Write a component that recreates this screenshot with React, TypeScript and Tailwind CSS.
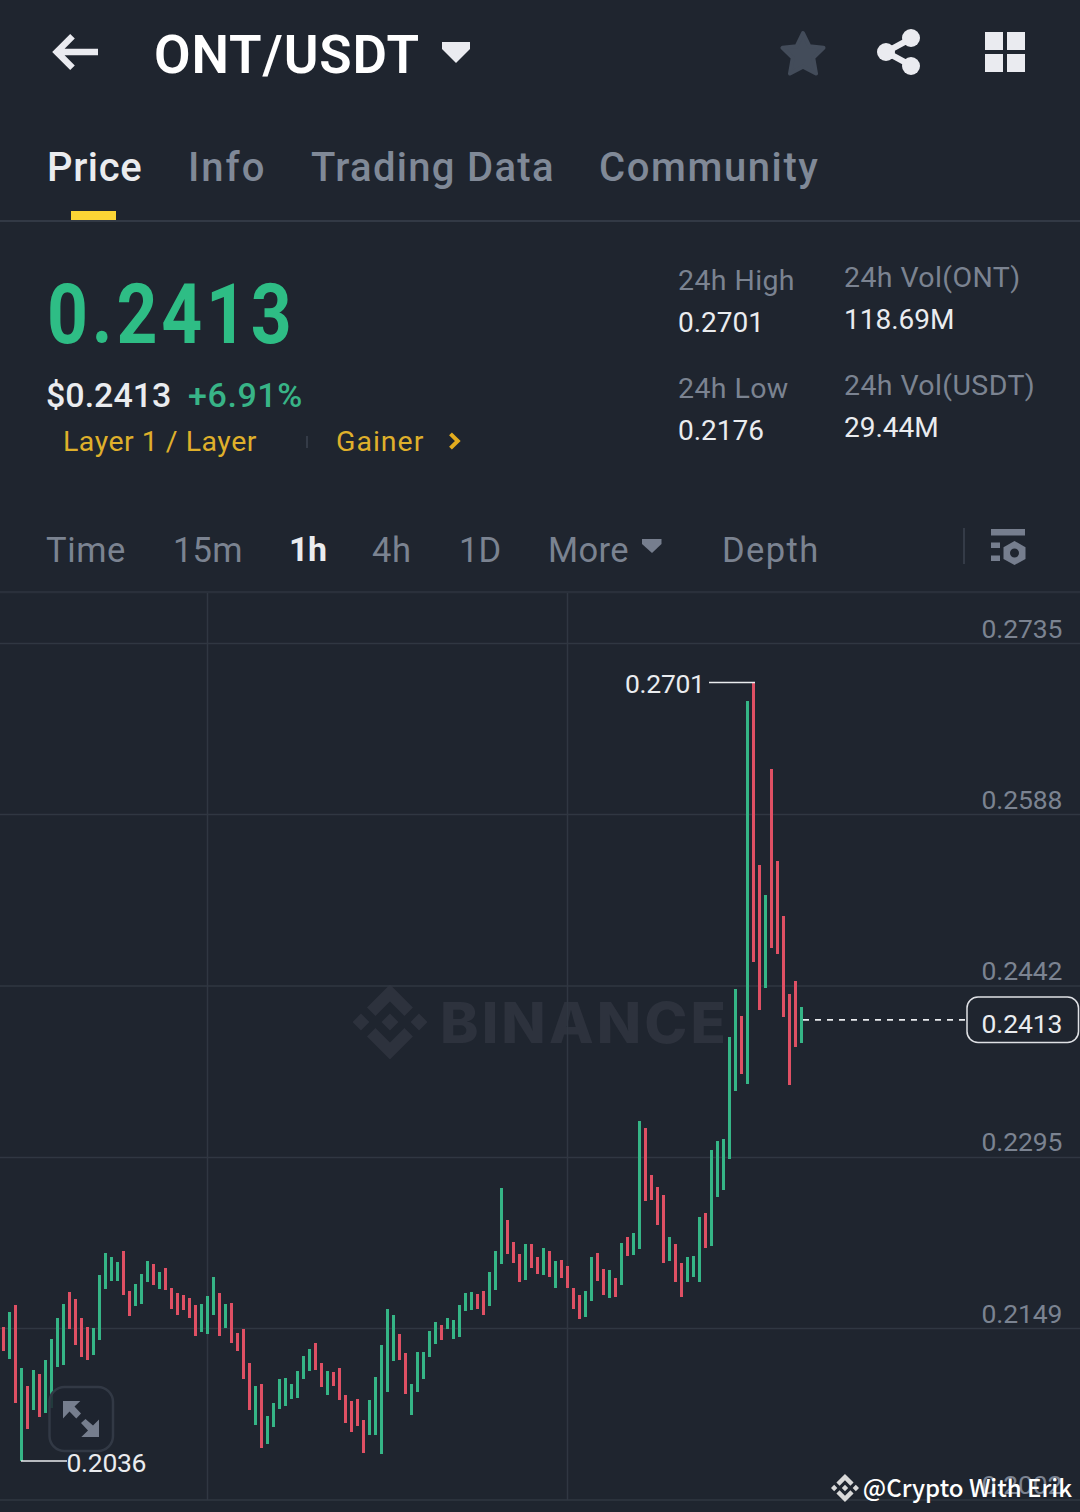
import { SiBinance } from "react-icons/si";

type Candle = ["g" | "r", number, number];

const UP = "#35b586";
const DOWN = "#df5064";
const GRID = "#303742";

const tabs = [
  { label: "Price", style: "w-[141px] tracking-[0.6px]", active: true },
  { label: "Info", style: "w-[123px] tracking-[2px]" },
  { label: "Trading Data", style: "w-[288px] tracking-[1.3px]" },
  { label: "Community", style: "w-[230px] tracking-[1.6px]" },
];

const axisLabels = [
  { value: "0.2735", y: 638 },
  { value: "0.2588", y: 809 },
  { value: "0.2442", y: 980 },
  { value: "0.2295", y: 1151 },
  { value: "0.2149", y: 1323 },
  { value: "0.2002", y: 1494 },
];

const gridRows = [643.5, 814.5, 986, 1157.5, 1328.5, 1500];
const gridCols = [207.5, 567.5];

// [direction, high, low] in chart units, one every 6px
const candles: Candle[] = [
  ["r", 1327, 1351], ["g", 1312, 1359], ["r", 1305, 1403], ["g", 1368, 1461], ["r", 1386, 1429],
  ["g", 1370, 1410], ["r", 1374, 1417], ["g", 1360, 1413], ["g", 1339, 1408], ["g", 1318, 1367],
  ["g", 1304, 1365], ["r", 1292, 1329], ["r", 1299, 1345], ["r", 1318, 1357], ["r", 1327, 1360],
  ["g", 1328, 1355], ["g", 1275, 1340], ["g", 1253, 1289], ["g", 1257, 1281], ["g", 1262, 1281],
  ["r", 1251, 1295], ["r", 1291, 1316], ["g", 1284, 1306], ["g", 1274, 1304], ["g", 1261, 1282],
  ["r", 1264, 1285], ["g", 1272, 1289], ["r", 1268, 1290], ["r", 1288, 1309], ["r", 1293, 1315],
  ["r", 1295, 1310], ["r", 1298, 1318], ["r", 1305, 1336], ["g", 1304, 1332], ["g", 1296, 1334],
  ["g", 1277, 1315], ["r", 1293, 1336], ["g", 1304, 1328], ["r", 1303, 1343], ["r", 1333, 1351],
  ["r", 1329, 1379], ["r", 1363, 1410], ["g", 1386, 1425], ["r", 1384, 1448], ["g", 1416, 1444],
  ["g", 1403, 1427], ["g", 1379, 1409], ["g", 1378, 1406], ["g", 1384, 1399], ["g", 1371, 1398],
  ["g", 1356, 1379], ["g", 1349, 1371], ["r", 1343, 1370], ["r", 1363, 1387], ["g", 1371, 1395],
  ["r", 1372, 1386], ["r", 1368, 1400], ["r", 1395, 1423], ["r", 1401, 1432], ["r", 1399, 1426],
  ["r", 1420, 1453], ["g", 1400, 1435], ["g", 1377, 1435], ["g", 1345, 1454], ["g", 1309, 1392],
  ["g", 1315, 1361], ["r", 1334, 1360], ["r", 1353, 1394], ["g", 1384, 1415], ["g", 1352, 1392],
  ["g", 1352, 1379], ["g", 1331, 1357], ["g", 1322, 1344], ["r", 1325, 1340], ["g", 1318, 1329],
  ["g", 1320, 1339], ["g", 1305, 1337], ["g", 1293, 1311], ["g", 1292, 1310], ["r", 1294, 1309],
  ["r", 1291, 1315], ["g", 1272, 1306], ["g", 1251, 1290], ["g", 1188, 1264], ["r", 1220, 1254],
  ["r", 1242, 1263], ["r", 1254, 1282], ["g", 1244, 1280], ["r", 1244, 1268], ["r", 1257, 1274],
  ["g", 1248, 1275], ["r", 1251, 1277], ["g", 1261, 1288], ["r", 1260, 1278], ["r", 1266, 1288],
  ["r", 1288, 1309], ["r", 1295, 1319], ["g", 1291, 1317], ["g", 1257, 1301], ["r", 1253, 1281],
  ["r", 1269, 1295], ["g", 1270, 1298], ["r", 1278, 1297], ["g", 1243, 1285], ["r", 1237, 1256],
  ["g", 1233, 1255], ["g", 1121, 1249], ["r", 1128, 1201], ["r", 1175, 1200], ["r", 1187, 1225],
  ["r", 1195, 1263], ["g", 1237, 1261], ["r", 1244, 1282], ["r", 1263, 1297], ["g", 1257, 1282],
  ["g", 1256, 1277], ["g", 1217, 1282], ["r", 1213, 1248], ["g", 1150, 1246], ["g", 1141, 1197],
  ["g", 1139, 1190], ["g", 1037, 1159], ["g", 989, 1091], ["r", 1016, 1074], ["g", 701, 1084],
  ["r", 682, 962], ["r", 865, 1010], ["g", 895, 988], ["r", 769, 948], ["r", 861, 954],
  ["r", 916, 1017], ["r", 994, 1085], ["r", 981, 1047], ["g", 1007, 1043],
];

function Stat({ label, value }: { label: string; value: string }) {
  return (
    <div className="leading-[42px] whitespace-nowrap">
      <div className="text-[28.5px] text-[#7b8391] tracking-[0.4px]">{label}</div>
      <div className="text-[28px] text-[#eaecef]">{value}</div>
    </div>
  );
}

function Header() {
  return (
    <header className="flex h-[105px] items-center">
      <svg className="ml-[52px] -mt-px h-9 w-[46px]" viewBox="0 0 46 36" fill="none" stroke="#eaebf0" strokeWidth="6.5">
        <path d="M20.5 2.3L4.8 18l15.7 15.7M4 18h42" />
      </svg>
      <h1 className="ml-[56px] mt-[5px] w-[288px] whitespace-nowrap text-[53px] font-semibold leading-[60px] tracking-[0.9px] text-white">ONT/USDT</h1>
      <svg className="h-[21px] w-7" viewBox="0 0 28 21" fill="#eaebf0">
        <path d="M0 0h28v7L14 21 0 7z" />
      </svg>
      <svg className="ml-[310px] h-[46px] w-[46px]" viewBox="0 0 46 46" fill="#434c5a" stroke="#434c5a" strokeWidth="4" strokeLinejoin="round">
        <path d="M23 3l6.3 13.2 14.2 1.6-10.3 9.9 2.8 15.8L23 36.8 10 43.5l2.8-15.8L2.5 17.8l14.2-1.6z" />
      </svg>
      <svg className="-mt-px ml-[51px] h-[46px] w-11" viewBox="0 0 44 46" fill="#eaebf0">
        <path d="M34 9.5L9 23l25 13.5" fill="none" stroke="#eaebf0" strokeWidth="6" />
        <circle cx="34" cy="9" r="9" />
        <circle cx="9" cy="23" r="9" />
        <circle cx="34" cy="37" r="9" />
      </svg>
      <div className="-mt-0.5 ml-[64px] grid h-10 w-10 grid-cols-2 gap-1">
        <span className="bg-[#eaebf0]" />
        <span className="bg-[#eaebf0]" />
        <span className="bg-[#eaebf0]" />
        <span className="bg-[#eaebf0]" />
      </div>
    </header>
  );
}

function Tabs() {
  return (
    <nav className="flex h-[117px] border-b-2 border-[#323945] pl-[47px] pt-[43px]">
      {tabs.map((tab) => (
        <div key={tab.label} className={tab.style}>
          <div className={`whitespace-nowrap text-[40px] font-medium leading-[40px] ${tab.active ? "text-[#eaecef]" : "text-[#808997]"}`}>
            {tab.label}
          </div>
          {tab.active && <div className="ml-6 mt-[23px] h-[9px] w-[45px] bg-[#fcd535]" />}
        </div>
      ))}
    </nav>
  );
}

function Summary() {
  return (
    <section className="flex h-[286px]">
      <div className="w-[678px] pl-[46px] pt-[53px]">
        <div className="ml-px origin-left scale-x-[0.86] text-[83px] font-bold leading-[80px] tracking-[4.5px] text-[#2ebd85]">0.2413</div>
        <div className="mt-5 flex text-[34px] leading-[40px]">
          <span className="w-[142px] font-medium text-[#eaecef]">$0.2413</span>
          <span className="font-medium tracking-[0.6px] text-[#38b487]">+6.91%</span>
        </div>
        <div className="mt-[9px] flex items-center pl-[17px] text-[28.5px] leading-9 text-[#dfb02b]">
          <span className="w-[243px] whitespace-nowrap tracking-[0.5px]">Layer 1 / Layer</span>
          <span className="h-3 w-0.5 bg-[#343b47]" />
          <span className="ml-[28px] w-[113px] tracking-[1px]">Gainer</span>
          <svg className="-mt-0.5 h-[18px] w-3" viewBox="0 0 12 18" fill="none" stroke="#e3ac1e" strokeWidth="4">
            <path d="M1.5 1.8L8.8 9l-7.3 7.2" />
          </svg>
        </div>
      </div>
      <div className="flex w-[166px] flex-col gap-6 pt-[38px]">
        <Stat label="24h High" value="0.2701" />
        <Stat label="24h Low" value="0.2176" />
      </div>
      <div className="flex flex-col gap-6 pt-[35px]">
        <Stat label="24h Vol(ONT)" value="118.69M" />
        <Stat label="24h Vol(USDT)" value="29.44M" />
      </div>
    </section>
  );
}

function Intervals() {
  return (
    <section className="flex h-[83px] items-center pl-[46px] pt-0.5 text-[34.5px] text-[#7b8391]">
      <span className="w-[127px] tracking-[0.6px]">Time</span>
      <span className="w-[116px] tracking-[0.2px]">15m</span>
      <span className="w-[83px] -mt-0.5 text-[34px] font-bold tracking-[-0.5px] text-[#eaecef]">1h</span>
      <span className="w-[87px] tracking-[0.5px]">4h</span>
      <span className="w-[89px]">1D</span>
      <span className="w-[94px] tracking-[0.4px]">More</span>
      <svg className="-mt-2.5 h-[14px] w-5" viewBox="0 0 20 14" fill="#767e8e">
        <path d="M0 0h19.5v5L10 14 0 5z" />
      </svg>
      <span className="ml-[60px] w-[241px] tracking-[1.4px]">Depth</span>
      <span className="-mt-2.5 h-9 w-0.5 bg-[#343b47]" />
      <svg className="-mt-2 ml-[25px] h-9 w-9" viewBox="0 0 36 36" fill="#767e8e">
        <path d="M1 0h34v6.5H1zM1 13.5h9V19H1zM1 26.5h9V32H1z" />
        <path fillRule="evenodd" d="M24.5 12l11 6.3v11.6L24.5 36l-11-6.1V18.3zM24.5 19.5a4.5 4.5 0 100 9 4.5 4.5 0 000-9z" />
      </svg>
    </section>
  );
}

function Chart() {
  return (
    <svg className="block h-[921px] w-[1080px]" viewBox="0 591 1080 921" fontFamily="Roboto, sans-serif" fontSize="26.5">
      {/* Watermark */}
      <g fill="#2d323d">
        <SiBinance x={352.5} y={984.5} size={75} color="#2d323d" />
        <text x="440" y="1043" fontFamily="Inter, sans-serif" fontSize="56" fontWeight="800" letterSpacing="3" textLength="289" lengthAdjust="spacingAndGlyphs">
          BINANCE
        </text>
      </g>

      {/* Grid */}
      <g stroke={GRID} strokeWidth="1.5">
        <path d="M0 592h1080" stroke="#2a303b" strokeWidth="2.5" />
        {gridRows.map((y) => (
          <path key={y} d={`M0 ${y}h1080`} />
        ))}
        {gridCols.map((x) => (
          <path key={x} d={`M${x} 593V1500`} />
        ))}
      </g>

      {axisLabels.map(({ value, y }) => (
        <text key={value} x="981.5" y={y} fill="#7b8391" textLength="81">{value}</text>
      ))}

      {candles.map(([dir, high, low], i) => (
        <rect key={i} x={2 + i * 6} y={high} width="3" height={low - high} fill={dir === "g" ? UP : DOWN} />
      ))}

      {/* High / low markers */}
      <path d="M709 682.5h46M21 1461h46" stroke="#eaecef" strokeWidth="1.5" />
      <text x="625" y="693" fill="#eaecef" textLength="80">0.2701</text>
      <text x="66.5" y="1472" fill="#eaecef" textLength="80">0.2036</text>

      {/* Last price */}
      <path d="M803 1019.8h163" stroke="#eaecef" strokeWidth="1.8" strokeDasharray="6 6" />
      <rect x="967" y="997" width="111.5" height="45.5" rx="11" fill="#1f252f" stroke="#dfe1e5" strokeWidth="1.5" />
      <text x="981.5" y="1033" fill="#eaecef" textLength="81">0.2413</text>

      {/* Expand button */}
      <rect x="49.5" y="1387" width="63.5" height="64" rx="15" fill="#1f252f" fillOpacity="0.85" stroke="#323945" strokeWidth="2.5" />
      <path
        d="M63 1401h17.3l-5.8 5.5 6.5 7-4.7 5-6.8-7-6.5 7zM99 1437v-17.5l-6 6-7.5-6.5-4.5 4 7 7.5-6.7 6.5z"
        fill="#767e8e"
      />
    </svg>
  );
}

export default function App() {
  return (
    <div className="relative h-[1512px] w-[1080px] overflow-hidden bg-[#1f252f] font-['Roboto',sans-serif]">
      <Header />
      <Tabs />
      <Summary />
      <Intervals />
      <Chart />
      <div className="absolute bottom-2 right-[8px] flex items-center gap-1 whitespace-nowrap text-white">
        <SiBinance className="mt-0.5 h-7 w-7 text-[#d9d9d9]" />
        <span className="font-['Noto_Sans_CJK_SC','Noto_Sans',sans-serif] text-[24px] font-medium leading-[34px]">@Crypto With Erik</span>
      </div>
    </div>
  );
}
